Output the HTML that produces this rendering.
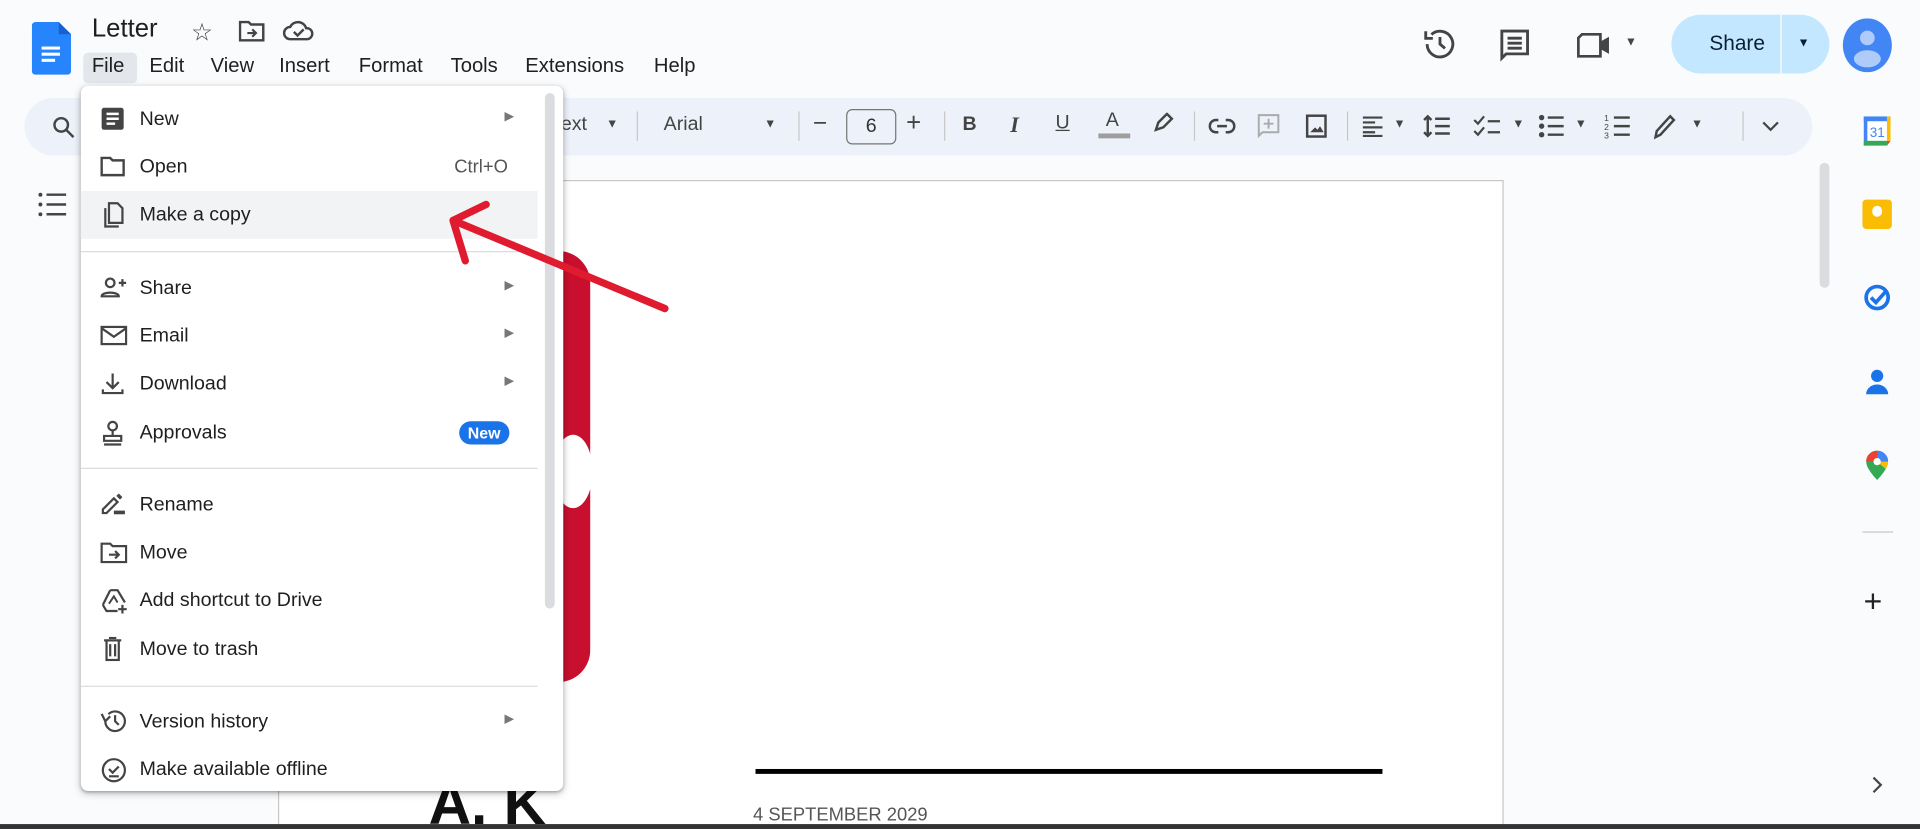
<!DOCTYPE html>
<html><head><meta charset="utf-8"><style>
html,body{margin:0;padding:0;width:1920px;height:829px;overflow:hidden;background:#f9fbfd;font-family:"Liberation Sans",Arial,sans-serif;}
#w{position:absolute;left:0;top:0;width:1568px;height:677px;transform:scale(1.22449);transform-origin:0 0;background:#f9fbfd;overflow:hidden;color:#1f1f1f}
.a{position:absolute}
.menu span{position:absolute}
.mi{position:absolute;left:0;width:394px;height:39px;font-size:16px;color:#1f1f1f}
.mi .t{position:absolute;left:48px;top:11px}
.mi svg{position:absolute;left:16px;top:9px}
.mi .ar{position:absolute;left:346px;top:12px;font-size:10px;color:#777}
.tb{position:absolute;top:92px;font-size:16px;color:#444}
.dv{position:absolute;top:91px;width:1px;height:24px;background:#c7c7c7}
.mn{position:absolute;top:45px;font-size:16.5px;color:#1f1f1f}
</style></head><body><div id="w">

<!-- docs logo -->
<svg class="a" style="left:26px;top:18px" width="32" height="43" viewBox="0 0 32 43"><path d="M3 0h19l10 10v30a3 3 0 0 1-3 3H3a3 3 0 0 1-3-3V3a3 3 0 0 1 3-3z" fill="#2684fc"/><path d="M22 0v10h10z" fill="#1a5fd0"/><rect x="8" y="20" width="15" height="2.5" fill="#fff"/><rect x="8" y="25" width="15" height="2.5" fill="#fff"/><rect x="8" y="30" width="11" height="2.5" fill="#fff"/></svg>
<div class="a" style="left:75px;top:12px;font-size:21px;color:#1f1f1f">Letter</div>
<div class="a" style="left:156px;top:14px;font-size:20px;color:#444">☆</div>
<svg class="a" style="left:195px;top:16px" width="22" height="18" viewBox="0 0 22 18"><path d="M1 2h7l2 2h10v13H1z" fill="none" stroke="#444" stroke-width="2"/><path d="M7 11h7M11 8l3 3-3 3" fill="none" stroke="#444" stroke-width="1.8"/></svg>
<svg class="a" style="left:231px;top:16px" width="26" height="18" viewBox="0 0 26 18"><path d="M6 16a5 5 0 0 1 0-10 7 7 0 0 1 13 1 4.5 4.5 0 0 1 1 9z" fill="none" stroke="#444" stroke-width="2"/><path d="M9 10l3 3 5-5" fill="none" stroke="#444" stroke-width="2"/></svg>

<div class="a" style="left:68px;top:43px;width:44px;height:25px;background:#e3e7ec;border-radius:4px"></div>
<div class="mn" style="left:75px">File</div><div class="mn" style="left:122px">Edit</div><div class="mn" style="left:172px">View</div><div class="mn" style="left:228px">Insert</div><div class="mn" style="left:293px">Format</div><div class="mn" style="left:368px">Tools</div><div class="mn" style="left:429px">Extensions</div><div class="mn" style="left:534px">Help</div>

<!-- top right -->
<svg class="a" style="left:1162px;top:22px" width="28" height="28" viewBox="0 0 24 24"><path d="M3 12a9 9 0 1 0 3-6.7" fill="none" stroke="#444" stroke-width="2"/><path d="M2 3v5h5" fill="none" stroke="#444" stroke-width="2"/><path d="M12 7v5l3.5 3" fill="none" stroke="#444" stroke-width="2"/></svg>
<svg class="a" style="left:1223px;top:23px" width="28" height="28" viewBox="0 0 24 24"><path d="M3 2h18v16H6l-3 3z" fill="none" stroke="#444" stroke-width="2"/><path d="M7 7h10M7 10.5h10M7 14h10" stroke="#444" stroke-width="2"/></svg>
<svg class="a" style="left:1287px;top:25px" width="30" height="24" viewBox="0 0 30 24"><path d="M5 3h15v18H2V6z" fill="none" stroke="#444" stroke-width="2.2"/><path d="M20 9l7-4v14l-7-4" fill="#444"/></svg>
<div class="a" style="left:1327px;top:29px;font-size:10px;color:#444">▼</div>
<div class="a" style="left:1365px;top:12px;width:129px;height:48px;background:#c2e7ff;border-radius:24px"></div>
<div class="a" style="left:1454px;top:12px;width:1px;height:48px;background:#fff"></div>
<div class="a" style="left:1396px;top:26px;font-size:17px;color:#0b1f33">Share</div>
<div class="a" style="left:1468px;top:30px;font-size:10px;color:#0b1f33">▼</div>
<svg class="a" style="left:1504px;top:15px" width="42" height="44" viewBox="0 0 42 44"><ellipse cx="21" cy="22" rx="20" ry="22" fill="#4285f4"/><circle cx="21" cy="16" r="6" fill="#aecbfa"/><ellipse cx="21" cy="33" rx="11" ry="7" fill="#aecbfa"/></svg>

<!-- toolbar -->
<div class="a" style="left:20px;top:80px;width:1460px;height:47px;background:#edf2fa;border-radius:24px"></div>
<svg class="a" style="left:42px;top:94px" width="20" height="20" viewBox="0 0 20 20"><circle cx="8" cy="8" r="5.5" fill="none" stroke="#444" stroke-width="2"/><path d="M12 12l6 6" stroke="#444" stroke-width="2"/></svg>
<div class="tb" style="left:458px;top:93px">ext</div><div class="tb" style="left:495px;top:96px;font-size:10px">▼</div>
<div class="dv" style="left:520px"></div>
<div class="tb" style="left:542px;top:93px">Arial</div><div class="tb" style="left:624px;top:96px;font-size:10px">▼</div>
<div class="dv" style="left:652px"></div>
<div class="tb" style="left:664px;top:90px;font-size:20px">−</div>
<div class="a" style="left:691px;top:89px;width:39px;height:27px;border:1px solid #747775;border-radius:5px;text-align:center;line-height:27px;font-size:16px;color:#333">6</div>
<div class="tb" style="left:740px;top:89px;font-size:21px">+</div>
<div class="dv" style="left:771px"></div>
<div class="tb" style="left:786px;top:93px;font-weight:bold">B</div>
<div class="tb" style="left:825px;top:92px;font-style:italic;font-weight:bold;font-family:'Liberation Serif',serif;font-size:18px">I</div>
<div class="tb" style="left:862px;top:92px;text-decoration:underline">U</div>
<div class="tb" style="left:903px;top:90px">A</div><div class="a" style="left:897px;top:109px;width:26px;height:4px;background:#9e9e9e"></div>
<svg class="a" style="left:941px;top:92px" width="18" height="18" viewBox="0 0 18 18"><path d="M3 14l2-6 7-7 4 4-7 7z" fill="none" stroke="#444" stroke-width="2"/></svg>
<div class="dv" style="left:975px"></div>
<svg class="a" style="left:987px;top:96px" width="22" height="14" viewBox="0 0 22 14"><path d="M8 2H6a5 5 0 0 0 0 10h2M14 2h2a5 5 0 0 1 0 10h-2M7 7h8" fill="none" stroke="#444" stroke-width="2"/></svg>
<svg class="a" style="left:1026px;top:92px" width="20" height="22" viewBox="0 0 20 22"><path d="M2 2h16v14H5l-3 3z" fill="none" stroke="#aaa" stroke-width="1.6"/><path d="M10 5v8M6 9h8" stroke="#aaa" stroke-width="1.6"/></svg>
<svg class="a" style="left:1066px;top:93px" width="18" height="20" viewBox="0 0 18 20"><rect x="1.5" y="1.5" width="15" height="17" fill="none" stroke="#444" stroke-width="2"/><path d="M4 15l4-4 2 2 2-3 3 5z" fill="#444"/></svg>
<div class="dv" style="left:1100px"></div>
<svg class="a" style="left:1112px;top:94px" width="18" height="18" viewBox="0 0 18 18"><path d="M1 2h16M1 6h10M1 10h16M1 14h10M1 17h16" stroke="#444" stroke-width="1.8"/></svg>
<div class="tb" style="left:1138px;top:96px;font-size:10px">▼</div>
<svg class="a" style="left:1162px;top:93px" width="24" height="20" viewBox="0 0 24 20"><path d="M4 2v16M1 5l3-3 3 3M1 15l3 3 3-3M10 4h12M10 10h12M10 16h12" fill="none" stroke="#444" stroke-width="2"/></svg>
<svg class="a" style="left:1203px;top:93px" width="24" height="20" viewBox="0 0 24 20"><path d="M1 5l3 3 5-6M1 14l3 3 5-6M12 6h10M12 15h10" fill="none" stroke="#444" stroke-width="1.8"/></svg>
<div class="tb" style="left:1235px;top:96px;font-size:10px">▼</div>
<svg class="a" style="left:1256px;top:93px" width="22" height="20" viewBox="0 0 22 20"><circle cx="3" cy="3" r="2.2" fill="#444"/><circle cx="3" cy="10" r="2.2" fill="#444"/><circle cx="3" cy="17" r="2.2" fill="#444"/><path d="M8 3h13M8 10h13M8 17h13" stroke="#444" stroke-width="2"/></svg>
<div class="tb" style="left:1286px;top:96px;font-size:10px">▼</div>
<svg class="a" style="left:1310px;top:92px" width="22" height="22" viewBox="0 0 22 22"><text x="0" y="7" font-size="7" fill="#444" font-family="Liberation Sans">1</text><text x="0" y="14" font-size="7" fill="#444" font-family="Liberation Sans">2</text><text x="0" y="21" font-size="7" fill="#444" font-family="Liberation Sans">3</text><path d="M8 4h13M8 11h13M8 18h13" stroke="#444" stroke-width="2"/></svg>
<svg class="a" style="left:1349px;top:92px" width="20" height="22" viewBox="0 0 20 22"><path d="M3 20l1-5L15 3l3 3L7 18z" fill="none" stroke="#444" stroke-width="2"/></svg>
<div class="tb" style="left:1381px;top:96px;font-size:10px">▼</div>
<div class="dv" style="left:1423px"></div>
<svg class="a" style="left:1439px;top:98px" width="14" height="10" viewBox="0 0 14 10"><path d="M1 2l6 6 6-6" fill="none" stroke="#444" stroke-width="1.8"/></svg>

<!-- outline icon -->
<svg class="a" style="left:31px;top:157px" width="24" height="20" viewBox="0 0 24 20"><circle cx="2" cy="2" r="1.6" fill="#444"/><circle cx="2" cy="10" r="1.6" fill="#444"/><circle cx="2" cy="18" r="1.6" fill="#444"/><path d="M7 2h16M7 10h16M7 18h16" stroke="#444" stroke-width="2"/></svg>

<!-- page -->
<div class="a" style="left:227px;top:147px;width:999px;height:540px;background:#fff;border:1px solid #c7c7c7"></div>
<div class="a" style="left:430px;top:205px;width:52px;height:352px;background:#c8102e;border-radius:0 26px 26px 0"></div>
<div class="a" style="left:452px;top:355px;width:32px;height:60px;background:#fff;border-radius:50%"></div>
<div class="a" style="left:617px;top:628px;width:512px;height:4px;background:#000"></div>
<div class="a" style="left:615px;top:657px;font-size:15px;color:#555">4 SEPTEMBER 2029</div>
<div class="a" style="left:350px;top:630px;font-size:48px;font-weight:bold;color:#111">A. K</div>
<div class="a" style="left:0;top:673px;width:1568px;height:4px;background:#333"></div>

<!-- right scrollbar & side panel -->
<div class="a" style="left:1486px;top:133px;width:8px;height:102px;background:#dadce0;border-radius:4px"></div>
<svg class="a" style="left:1522px;top:95px" width="22" height="24" viewBox="0 0 22 24"><rect x="0" y="0" width="22" height="24" rx="2" fill="#fff"/><rect x="0" y="0" width="22" height="4" fill="#4285f4"/><rect x="0" y="0" width="3" height="24" fill="#4285f4"/><rect x="19" y="0" width="3" height="20" fill="#fbbc04"/><rect x="0" y="20" width="19" height="4" fill="#34a853"/><path d="M19 20h3l-3 4z" fill="#ea4335"/><text x="5" y="17" font-size="11" fill="#4285f4" font-family="Liberation Sans">31</text></svg>
<div class="a" style="left:1521px;top:163px;width:24px;height:24px;background:#fbbc04;border-radius:3px"></div>
<div class="a" style="left:1529px;top:168px;width:8px;height:9px;background:#fff;border-radius:4px"></div>
<svg class="a" style="left:1521px;top:231px" width="24" height="24" viewBox="0 0 24 24"><circle cx="12" cy="12" r="9" fill="none" stroke="#1a73e8" stroke-width="3"/><path d="M7 12l4 4 9-10" fill="none" stroke="#1a73e8" stroke-width="3"/></svg>
<svg class="a" style="left:1523px;top:300px" width="20" height="24" viewBox="0 0 20 24"><circle cx="10" cy="7" r="5" fill="#1a73e8"/><path d="M1 22a9 8 0 0 1 18 0z" fill="#1a73e8"/></svg>
<svg class="a" style="left:1524px;top:368px" width="18" height="24" viewBox="0 0 18 24"><path d="M9 0a9 9 0 0 1 9 9c0 6-9 15-9 15S0 15 0 9a9 9 0 0 1 9-9z" fill="#34a853"/><path d="M9 0a9 9 0 0 1 9 9L9 9z" fill="#4285f4"/><path d="M0 9a9 9 0 0 1 9-9v9z" fill="#ea4335"/><path d="M9 9h9c0 2-1 4-2 6z" fill="#fbbc04"/><circle cx="9" cy="9" r="3" fill="#fff"/></svg>
<div class="a" style="left:1521px;top:434px;width:25px;height:1px;background:#c7c7c7"></div>
<div class="a" style="left:1522px;top:476px;font-size:26px;color:#222">+</div>
<svg class="a" style="left:1528px;top:634px" width="10" height="14" viewBox="0 0 10 14"><path d="M2 1l6 6-6 6" fill="none" stroke="#444" stroke-width="1.8"/></svg>

<!-- file menu -->
<div class="a menu" style="left:66px;top:70px;width:394px;height:576px;background:#fff;border-radius:6px;box-shadow:0 2px 6px rgba(0,0,0,.25),0 1px 2px rgba(0,0,0,.2)">
 <div class="a" style="left:379px;top:6px;width:8px;height:421px;background:#dadce0;border-radius:4px"></div>
 <div class="a" style="left:0;top:86px;width:373px;height:39px;background:#f1f3f4"></div>
 <div class="a" style="left:0;top:135px;width:373px;height:1px;background:#dadce0"></div>
 <div class="a" style="left:0;top:312px;width:373px;height:1px;background:#dadce0"></div>
 <div class="a" style="left:0;top:490px;width:373px;height:1px;background:#dadce0"></div>

 <div class="mi" style="top:8px"><svg width="20" height="20" viewBox="0 0 20 20"><rect x="1" y="1" width="18" height="18" rx="2" fill="#444"/><path d="M5 6h10M5 10h10M5 14h7" stroke="#fff" stroke-width="2"/></svg><span class="t">New</span><span class="ar">▶</span></div>
 <div class="mi" style="top:47px"><svg width="20" height="20" viewBox="0 0 20 20"><path d="M1 3h7l2 2h9v12H1z" fill="none" stroke="#444" stroke-width="2"/></svg><span class="t">Open</span><span class="t" style="left:305px;color:#555;font-size:15px">Ctrl+O</span></div>
 <div class="mi" style="top:86px"><svg width="20" height="22" viewBox="0 0 20 22"><path d="M4 5v15h11" fill="none" stroke="#444" stroke-width="1.8"/><path d="M7 1h7l4 4v12H7z" fill="none" stroke="#444" stroke-width="1.8"/></svg><span class="t">Make a copy</span></div>
 <div class="mi" style="top:146px"><svg width="22" height="20" viewBox="0 0 22 20"><circle cx="8" cy="6" r="3.5" fill="none" stroke="#444" stroke-width="1.8"/><path d="M1 17c0-4 14-4 14 0z" fill="none" stroke="#444" stroke-width="1.8"/><path d="M18 3v6M15 6h6" stroke="#444" stroke-width="1.8"/></svg><span class="t">Share</span><span class="ar">▶</span></div>
 <div class="mi" style="top:185px"><svg width="22" height="20" viewBox="0 0 22 20"><rect x="1" y="3" width="20" height="14" fill="none" stroke="#444" stroke-width="1.8"/><path d="M1 4l10 7 10-7" fill="none" stroke="#444" stroke-width="1.8"/></svg><span class="t">Email</span><span class="ar">▶</span></div>
 <div class="mi" style="top:224px"><svg width="20" height="20" viewBox="0 0 20 20"><path d="M10 2v11M5 9l5 5 5-5M2 15v3h16v-3" fill="none" stroke="#444" stroke-width="1.8"/></svg><span class="t">Download</span><span class="ar">▶</span></div>
 <div class="mi" style="top:264px"><svg width="20" height="22" viewBox="0 0 20 22"><circle cx="10" cy="5" r="3.5" fill="none" stroke="#444" stroke-width="1.8"/><path d="M10 9v4M3 13h14v4H3zM3 20h14" fill="none" stroke="#444" stroke-width="1.8"/></svg><span class="t">Approvals</span><span class="a" style="left:309px;top:10px;background:#1a73e8;color:#fff;font-size:13px;font-weight:bold;border-radius:10px;padding:2px 7px">New</span></div>
 <div class="mi" style="top:323px"><svg width="22" height="20" viewBox="0 0 22 20"><path d="M2 17v-3l9-9 3 3-9 9z" fill="none" stroke="#444" stroke-width="1.8"/><path d="M13 3l2-2 3 3-2 2" fill="#444"/><rect x="11" y="15" width="9" height="3" fill="#444"/></svg><span class="t">Rename</span></div>
 <div class="mi" style="top:362px"><svg width="22" height="20" viewBox="0 0 22 20"><path d="M1 3h7l2 2h11v13H1z" fill="none" stroke="#444" stroke-width="1.8"/><path d="M7 12h8M12 9l3 3-3 3" fill="none" stroke="#444" stroke-width="1.8"/></svg><span class="t">Move</span></div>
 <div class="mi" style="top:401px"><svg width="22" height="22" viewBox="0 0 22 22"><path d="M8 2h6l6 10M2 14L8 2M2 14l3 5h9" fill="none" stroke="#444" stroke-width="1.8"/><path d="M7 13l4-6 3 5" fill="none" stroke="#444" stroke-width="1.6"/><path d="M18 14v7M14.5 17.5h7" stroke="#444" stroke-width="1.8"/></svg><span class="t">Add shortcut to Drive</span></div>
 <div class="mi" style="top:441px"><svg width="20" height="20" viewBox="0 0 20 20"><path d="M3 3h14M7 1h6M5 3v16h10V3M8 6v10M12 6v10" fill="none" stroke="#444" stroke-width="1.8"/></svg><span class="t">Move to trash</span></div>
 <div class="mi" style="top:500px"><svg width="22" height="20" viewBox="0 0 22 20"><path d="M4 10a8 8 0 1 0 2.5-5.8" fill="none" stroke="#444" stroke-width="1.8"/><path d="M1 4l3 6 4-4" fill="none" stroke="#444" stroke-width="1.8"/><path d="M12 5v5l3 3" fill="none" stroke="#444" stroke-width="1.8"/></svg><span class="t">Version history</span><span class="ar">▶</span></div>
 <div class="mi" style="top:539px"><svg width="22" height="22" viewBox="0 0 22 22"><circle cx="11" cy="11" r="9" fill="none" stroke="#444" stroke-width="1.8"/><path d="M7 10l3 3 5-5M7 16h8" fill="none" stroke="#444" stroke-width="1.8"/></svg><span class="t">Make available offline</span></div>
</div>

<!-- red arrow -->
<svg class="a" style="left:0;top:0" width="1568" height="677" viewBox="0 0 1568 677"><path d="M543 252L370 180M370 180l27-13M370 180l10 33" fill="none" stroke="#e01b2f" stroke-width="6" stroke-linecap="round"/></svg>

</div></body></html>
